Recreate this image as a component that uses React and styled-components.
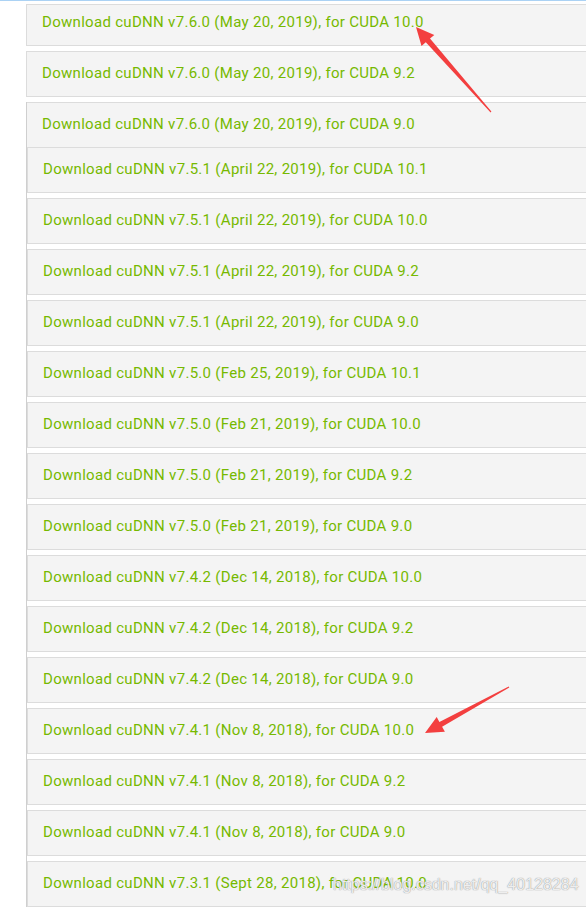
import React from 'react';
import styled, {createGlobalStyle} from 'styled-components';

const Global = createGlobalStyle`
	html, body {
		margin:0;
		padding:0;
		background:#fff;
		overflow:hidden;
	}
`;

const Top = [
	{label:"Download cuDNN v7.6.0 (May 20, 2019), for CUDA 10.0", short:true},
	{label:"Download cuDNN v7.6.0 (May 20, 2019), for CUDA 9.2"},
];

const Head = "Download cuDNN v7.6.0 (May 20, 2019), for CUDA 9.0";

const Items = [
	"Download cuDNN v7.5.1 (April 22, 2019), for CUDA 10.1",
	"Download cuDNN v7.5.1 (April 22, 2019), for CUDA 10.0",
	"Download cuDNN v7.5.1 (April 22, 2019), for CUDA 9.2",
	"Download cuDNN v7.5.1 (April 22, 2019), for CUDA 9.0",
	"Download cuDNN v7.5.0 (Feb 25, 2019), for CUDA 10.1",
	"Download cuDNN v7.5.0 (Feb 21, 2019), for CUDA 10.0",
	"Download cuDNN v7.5.0 (Feb 21, 2019), for CUDA 9.2",
	"Download cuDNN v7.5.0 (Feb 21, 2019), for CUDA 9.0",
	"Download cuDNN v7.4.2 (Dec 14, 2018), for CUDA 10.0",
	"Download cuDNN v7.4.2 (Dec 14, 2018), for CUDA 9.2",
	"Download cuDNN v7.4.2 (Dec 14, 2018), for CUDA 9.0",
	"Download cuDNN v7.4.1 (Nov 8, 2018), for CUDA 10.0",
	"Download cuDNN v7.4.1 (Nov 8, 2018), for CUDA 9.2",
	"Download cuDNN v7.4.1 (Nov 8, 2018), for CUDA 9.0",
	"Download cuDNN v7.3.1 (Sept 28, 2018), for CUDA 10.0",
];

// red annotation arrow, tail -> tip
function arrowPoints(tail, tip) {
	const dx = tip[0] - tail[0], dy = tip[1] - tail[1];
	const len = Math.hypot(dx, dy);
	const u = [dx / len, dy / len];
	const n = [-u[1], u[0]];
	const base = [tip[0] - 18 * u[0], tip[1] - 18 * u[1]];
	const p = (c, k) => [c[0] + k * n[0], c[1] + k * n[1]];
	const pts = [
		tip,
		p(base, 8.5),
		p(base, 2.8),
		p(tail, 0.6),
		p(tail, -0.6),
		p(base, -2.8),
		p(base, -8.5),
	];
	return pts.map(q => q[0].toFixed(1) + "," + q[1].toFixed(1)).join(" ");
}

function App() {
	return (
		<Page>
			<Global/>
			<TopRule/>
			<List>
				{Top.map(t => (
					<Panel key={t.label} $short={t.short}>
						<Link href="#">{t.label}</Link>
					</Panel>
				))}
				<Group>
					<GroupHead><Link href="#">{Head}</Link></GroupHead>
					{Items.map(i => (
						<Item key={i}><Link href="#">{i}</Link></Item>
					))}
				</Group>
			</List>
			<Marks width="586" height="909" viewBox="0 0 586 909">
				<polygon points={arrowPoints([491, 112], [416, 27])} fill="#f33f3f"/>
				<polygon points={arrowPoints([509, 687], [425, 733])} fill="#f33f3f"/>
			</Marks>
			<Watermark>https://blog.csdn.net/qq_40128284</Watermark>
		</Page>
	)
}

export default App;


const Page = styled.div`
	position:relative;
	width:586px;
	height:909px;
	overflow:hidden;
	font-family:Roboto, "Liberation Sans", sans-serif;
`;

const TopRule = styled.div`
	height:1px;
	background:#abd2f4;
`;

const List = styled.div`
	display:flex;
	flex-direction:column;
	gap:5px;
	padding-top:3px;
	padding-left:26px;
	width:700px;
`;

const Panel = styled.div`
	box-sizing:border-box;
	height:${p => p.$short ? 42 : 46}px;
	padding:0 15px ${p => p.$short ? 7 : 3}px;
	display:flex;
	align-items:center;
	background:#f4f4f4;
	border:1px solid #dcdcdc;
`;

const Group = styled.div`
	display:flex;
	flex-direction:column;
	gap:5px;
	border-left:1px solid #cfcfcf;
`;

const GroupHead = styled.div`
	box-sizing:border-box;
	height:45px;
	margin-bottom:-5px;
	padding:0 15px 2px 15px;
	display:flex;
	align-items:center;
	background:#f4f4f4;
	border-top:1px solid #dcdcdc;
`;

const Item = styled.div`
	box-sizing:border-box;
	height:46px;
	padding:0 15px 3px;
	display:flex;
	align-items:center;
	background:#f4f4f4;
	border:1px solid #dcdcdc;
`;

const Link = styled.a`
	color:#76b900;
	font-size:15px;
	letter-spacing:0.3px;
	text-decoration:none;
	white-space:nowrap;
`;

const Marks = styled.svg`
	position:absolute;
	left:0;
	top:0;
	pointer-events:none;
`;

const Watermark = styled.div`
	position:absolute;
	left:333px;
	top:876px;
	font-family:"Liberation Sans", Arial, sans-serif;
	font-size:16px;
	color:rgba(255,255,255,0.85);
	text-shadow:0 0 1px rgba(120,120,120,0.6), 0 0 1px rgba(120,120,120,0.6);
	white-space:nowrap;
	pointer-events:none;
`;
